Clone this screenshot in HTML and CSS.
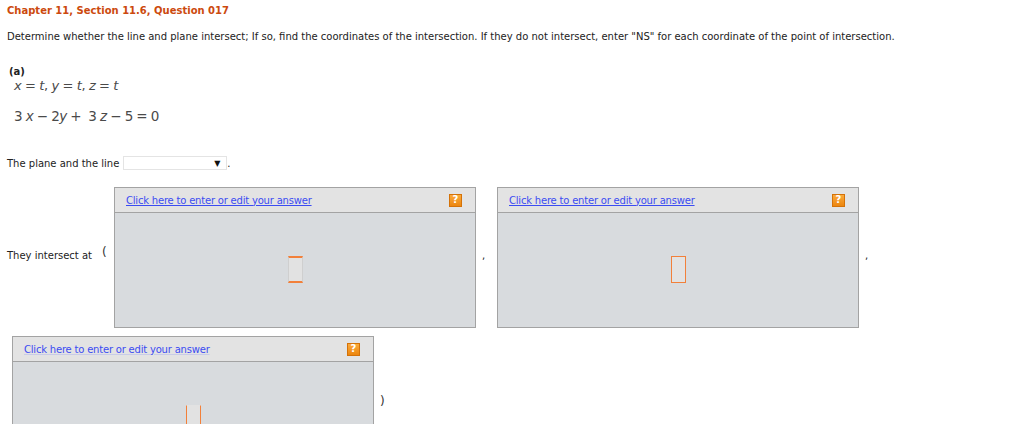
FILE: index.html
```html
<!DOCTYPE html>
<html lang="en">
<head>
    <meta charset="UTF-8">
    <title>Chapter 11, Section 11.6, Question 017</title>
    <link rel="stylesheet" href="styles.css">
</head>
<body>
    <div class="page">
        <h1 class="title">Chapter 11, Section 11.6, Question 017</h1>

        <p class="prompt">Determine whether the line and plane intersect; If so, find the coordinates of the intersection. If they do not intersect, enter "NS" for each coordinate of the point of intersection.</p>

        <!-- Part (a) -->
        <div class="part">(a)</div>
        <div class="eq eq-line"><i>x</i> = <i>t</i>, <i>y</i> = <i>t</i>, <i>z</i> = <i>t</i></div>
        <div class="eq eq-plane">3 <i>x</i> &minus; 2<i>y</i> + &nbsp;3 <i>z</i> &minus; 5 = 0</div>

        <div class="answer-row">
            <span>The plane and the line</span>
            <span class="select"><span class="arrow">&#9660;</span></span>
            <span>.</span>
        </div>

        <!-- Coordinates of the intersection -->
        <div class="point-row">
            <span class="point-label">They intersect at</span>
            <span class="paren">(</span>
            <div class="answer-box">
                <div class="box-head">
                    <a href="#" class="edit-link">Click here to enter or edit your answer</a>
                    <span class="help">?</span>
                </div>
                <div class="box-body"><span class="blank blank-open"></span></div>
            </div>
            <span class="comma">,</span>
            <div class="answer-box">
                <div class="box-head">
                    <a href="#" class="edit-link">Click here to enter or edit your answer</a>
                    <span class="help">?</span>
                </div>
                <div class="box-body"><span class="blank"></span></div>
            </div>
            <span class="comma">,</span>
        </div>

        <div class="point-row last-row">
            <div class="answer-box">
                <div class="box-head">
                    <a href="#" class="edit-link plain">Click here to enter or edit your answer</a>
                    <span class="help">?</span>
                </div>
                <div class="box-body"><span class="blank blank-sides"></span></div>
            </div>
            <span class="paren close">)</span>
        </div>
    </div>
</body>
</html>
```

FILE: styles.css
```css
/* Base page */
html, body {
    margin: 0;
    padding: 0;
    background: #ffffff;
    font-family: "DejaVu Sans", Verdana, sans-serif;
    font-size: 10px;
    color: #222222;
    overflow: hidden;
}

.page {
    padding: 4px 7px 0 7px;
}

.title {
    margin: 0;
    font-size: 10px;
    font-weight: bold;
    color: #cc4a0e;
    line-height: 14px;
}

.prompt {
    margin: 12px 0 0 0;
    line-height: 14px;
}

.part {
    margin-top: 22px;
    padding-left: 2px;
    font-weight: bold;
    line-height: 12px;
}

/* Equations */
.eq {
    padding-left: 7px;
    color: #4a4a4a;
}

.eq i {
    font-style: italic;
}

.eq-line {
    font-size: 13px;
    line-height: 16px;
    letter-spacing: -0.4px;
}

.eq-plane {
    margin-top: 13px;
    font-size: 13.5px;
    line-height: 18px;
    letter-spacing: -0.6px;
}

/* Dropdown row */
.answer-row {
    display: flex;
    align-items: center;
    margin-top: 30px;
    height: 16px;
}

.select {
    display: inline-flex;
    justify-content: flex-end;
    align-items: center;
    width: 104px;
    height: 14px;
    margin-left: 4px;
    border: 1px solid #e4e4e4;
    box-sizing: border-box;
}

.arrow {
    font-size: 8px;
    margin-right: 6px;
    color: #111111;
}

/* Answer boxes */
.point-row {
    display: flex;
    align-items: center;
    margin-top: 16px;
}

.last-row {
    margin-top: 8px;
    margin-left: 5px;
}

.point-label {
    width: 95px;
    margin-top: -4px;
}

.paren {
    width: 12px;
    font-size: 12px;
    color: #333333;
    margin-top: -12px;
}

.close {
    margin-left: 6px;
}

.comma {
    width: 21px;
    padding-left: 6px;
    box-sizing: border-box;
    font-size: 10px;
    margin-top: -4px;
}

.answer-box {
    width: 362px;
    height: 141px;
    border: 1px solid #a3a3a3;
    box-sizing: border-box;
    background: #d8dbde;
}

.box-head {
    display: flex;
    justify-content: space-between;
    align-items: center;
    height: 24px;
    padding: 0 13px 0 11px;
    background: #e3e3e3;
    border-bottom: 1px solid #a3a3a3;
}

.edit-link {
    color: #3b4cf2;
    font-size: 10px;
    text-decoration: underline;
    letter-spacing: -0.2px;
}

.edit-link.plain {
    text-decoration-color: #c8cbe8;
}

.help {
    display: inline-flex;
    justify-content: center;
    align-items: center;
    width: 13px;
    height: 13px;
    box-sizing: border-box;
    border: 1px solid #d47208;
    background: linear-gradient(#fbaa3c, #ec860f);
    color: #ffffff;
    font-weight: bold;
    font-size: 10px;
    line-height: 1;
}

.box-body {
    display: flex;
    justify-content: center;
    padding-top: 43px;
}

.blank {
    width: 15px;
    height: 27px;
    box-sizing: border-box;
    border: 1px solid #f2803a;
    background: #e2e2e2;
}

.blank-open {
    border-left-color: #cfcfcf;
    border-right-color: #cfcfcf;
    border-width: 2px 1px 2px 1px;
}

.blank-sides {
    border-top-color: #e2e2e2;
}
```
